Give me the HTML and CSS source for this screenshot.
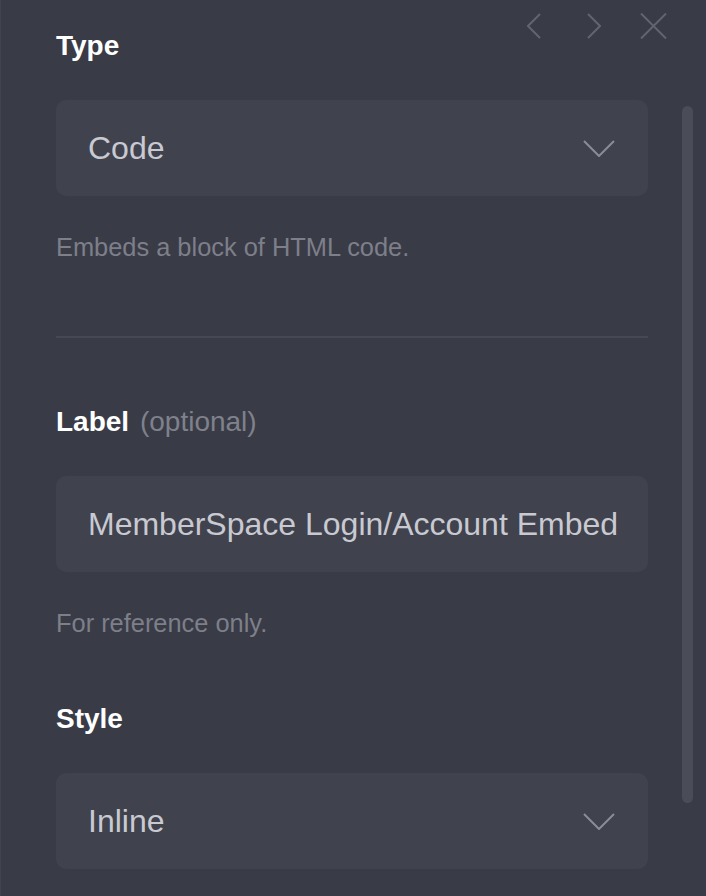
FILE: index.html
```html
<!DOCTYPE html>
<html lang="en">
<head>
    <meta charset="UTF-8">
    <meta name="viewport" content="width=device-width, initial-scale=1.0">
    <title>Block settings</title>
    <link rel="stylesheet" href="styles.css">
</head>
<body>
    <div class="panel">
        <div class="panel-nav">
            <svg class="nav-arrow" width="14" height="26" viewBox="0 0 14 26"><path d="M13 1 L1 13 L13 25"/></svg>
            <svg class="nav-arrow next" width="14" height="26" viewBox="0 0 14 26"><path d="M1 1 L13 13 L1 25"/></svg>
            <svg class="nav-close" width="27" height="26" viewBox="0 0 27 26"><path d="M1 0.5 L26 25.5 M26 0.5 L1 25.5"/></svg>
        </div>

        <div class="field">
            <div class="field-label">Type</div>
            <div class="select">
                <span>Code</span>
                <svg class="caret" width="32" height="17" viewBox="0 0 32 17"><path d="M1 1 L16 16 L31 1"/></svg>
            </div>
            <p class="help">Embeds a block of HTML code.</p>
        </div>

        <div class="divider"></div>

        <div class="field">
            <div class="field-label">Label <span class="optional">(optional)</span></div>
            <div class="select">
                <span>MemberSpace Login/Account Embed</span>
            </div>
            <p class="help">For reference only.</p>
        </div>

        <div class="field style-field">
            <div class="field-label">Style</div>
            <div class="select">
                <span>Inline</span>
                <svg class="caret" width="32" height="17" viewBox="0 0 32 17"><path d="M1 1 L16 16 L31 1"/></svg>
            </div>
        </div>

        <div class="scrollbar"></div>
    </div>
</body>
</html>
```

FILE: styles.css
```css
body {
    margin: 0;
    background: #393b47;
    font-family: 'Liberation Sans', Arial, sans-serif;
    color: #fff;
    overflow: hidden;
}
.panel {
    position: relative;
    height: 896px;
    padding: 30px 58px 0 55px;
    box-sizing: border-box;
    border-left: 1px solid #41434e;
}
.panel-nav {
    position: absolute;
    top: 13px;
    left: 526px;
    display: flex;
    align-items: flex-start;
}
.panel-nav path {
    fill: none;
    stroke: #62646f;
    stroke-width: 2;
}
.nav-arrow.next {
    margin-left: 46px;
}
.nav-close {
    margin-left: 39px;
}
.field-label {
    font-size: 28px;
    font-weight: bold;
    line-height: 32px;
    color: #fff;
}
.optional {
    font-weight: normal;
    color: #7f818b;
    margin-left: 3px;
}
.select {
    margin-top: 38px;
    height: 96px;
    background: #40424e;
    border-radius: 10px;
    display: flex;
    align-items: center;
    justify-content: space-between;
    padding: 0 33px 0 32px;
    font-size: 32px;
    color: #c9cad1;
    white-space: nowrap;
}
.caret path {
    fill: none;
    stroke: #8a8c96;
    stroke-width: 2;
}
.help {
    margin: 36px 0 0;
    font-size: 25.4px;
    line-height: 30px;
    color: #7d7f89;
}
.divider {
    margin-top: 74px;
    height: 2px;
    background: #464853;
    margin-bottom: 68px;
}
.style-field {
    margin-top: 65px;
}
.scrollbar {
    position: absolute;
    top: 106px;
    left: 681px;
    width: 11px;
    height: 697px;
    border-radius: 6px;
    background: #4a4c58;
}
```
